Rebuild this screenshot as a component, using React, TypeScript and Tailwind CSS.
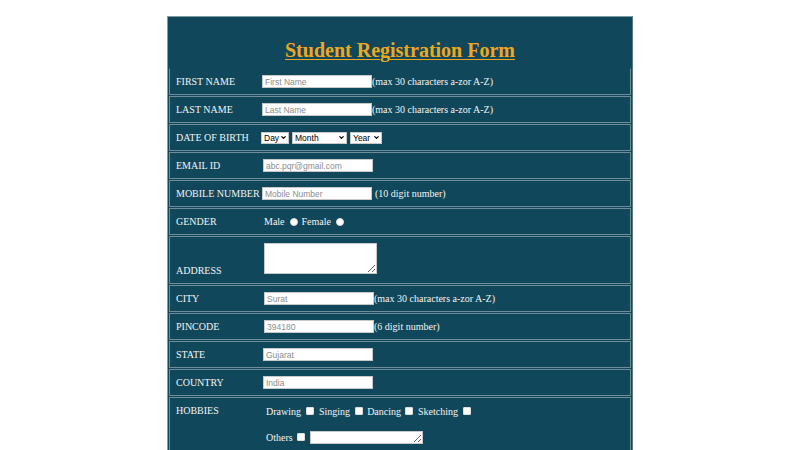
import React from 'react';
import { ChevronDown } from 'lucide-react';

const serif = "font-['Liberation_Serif','Times_New_Roman',serif]";
const sans = "font-['Liberation_Sans',Arial,sans-serif]";

const TextBox = ({ placeholder, className = '' }: { placeholder: string; className?: string }) => (
  <input
    type="text"
    placeholder={placeholder}
    className={`h-[13px] w-[110px] border border-[#c8c8c8] bg-white px-[2px] text-[8.5px] leading-[11px] text-black outline-none placeholder:text-[#8c8c8c] ${sans} ${className}`}
  />
);

const FakeSelect = ({ label, width }: { label: string; width: string }) => (
  <div
    className={`flex h-[12px] items-center justify-between border border-[#c8c8c8] bg-white pl-[2px] pr-[1px] text-[8.5px] leading-[10px] text-black ${sans} ${width}`}
  >
    <span>{label}</span>
    <ChevronDown size={7} strokeWidth={4} className="text-black" />
  </div>
);

const Radio = () => <span className="inline-block h-[8px] w-[8px] rounded-full border border-[#ddd] bg-white" />;
const Check = () => <span className="inline-block h-[8px] w-[8px] rounded-[1px] border border-[#ddd] bg-white" />;

const Row = ({
  label,
  children,
  first = false,
}: {
  label: string;
  children?: React.ReactNode;
  first?: boolean;
}) => (
  <div
    className={`flex h-[27px] items-center border border-[#6d8d97] ${first ? 'border-t-transparent' : ''}`}
  >
    <div className="w-[91px] shrink-0 whitespace-nowrap pl-[6px] leading-[12px]">{label}</div>
    <div className="flex items-center whitespace-nowrap leading-[12px]">{children}</div>
  </div>
);

export default function App() {
  return (
    <div className={`min-h-[450px] bg-white pt-4 text-[10px] text-[#f4f4f4] ${serif}`}>
      <div className="mx-auto h-[440px] w-[466px] overflow-hidden border border-[#7d9ba3] border-r-[#5a7780] bg-[#10475a] p-px">
        <div className="flex flex-col gap-px">
          <div className="h-[49px] pt-[21px] text-center">
            <span className="text-[20px] font-bold leading-[23px] text-[#efa71e] underline decoration-1 underline-offset-2">
              Student Registration Form
            </span>
          </div>

          <Row label="FIRST NAME" first>
            <TextBox placeholder="First Name" className="ml-px" />
            <span>(max 30 characters a-zor A-Z)</span>
          </Row>

          <Row label="LAST NAME">
            <TextBox placeholder="Last Name" className="ml-px" />
            <span>(max 30 characters a-zor A-Z)</span>
          </Row>

          <Row label="DATE OF BIRTH">
            <div className="flex items-center gap-[3px]">
              <FakeSelect label="Day" width="w-[28px]" />
              <FakeSelect label="Month" width="w-[55px]" />
              <FakeSelect label="Year" width="w-[32px]" />
            </div>
          </Row>

          <Row label="EMAIL ID">
            <TextBox placeholder="abc.pqr@gmail.com" className="ml-[2px]" />
          </Row>

          <Row label="MOBILE NUMBER">
            <TextBox placeholder="Mobile Number" className="ml-px" />
            <span className="ml-[3px]">(10 digit number)</span>
          </Row>

          <Row label="GENDER">
            <div className="ml-[3px] flex items-center">
              <span>Male</span>
              <span className="ml-[5px] flex"><Radio /></span>
              <span className="ml-[4px]">Female</span>
              <span className="ml-[5px] flex"><Radio /></span>
            </div>
          </Row>

          <div className="flex h-[48px] items-end border border-[#6d8d97]">
            <div className="mb-[6px] w-[91px] shrink-0 pl-[6px] leading-[12px]">ADDRESS</div>
            <textarea className="mb-[9px] ml-[3px] h-[31px] w-[113px] resize border border-[#c8c8c8] bg-white text-[8px] text-black outline-none" />
          </div>

          <Row label="CITY">
            <TextBox placeholder="Surat" className="ml-[3px]" />
            <span>(max 30 characters a-zor A-Z)</span>
          </Row>

          <Row label="PINCODE">
            <TextBox placeholder="394180" className="ml-[3px]" />
            <span>(6 digit number)</span>
          </Row>

          <Row label="STATE">
            <TextBox placeholder="Gujarat" className="ml-[2px]" />
          </Row>

          <Row label="COUNTRY">
            <TextBox placeholder="India" className="ml-[2px]" />
          </Row>

          <div className="flex border border-[#6d8d97] pb-[12px] pt-[6px]">
            <div className="w-[91px] shrink-0 pl-[6px] leading-[14px]">HOBBIES</div>
            <div className="ml-[5px] flex flex-col">
              <div className="flex h-[14px] items-center whitespace-nowrap">
                <span>Drawing</span>
                <span className="ml-[5px] flex"><Check /></span>
                <span className="ml-[5px]">Singing</span>
                <span className="ml-[5px] flex"><Check /></span>
                <span className="ml-[4px]">Dancing</span>
                <span className="ml-[4px] flex"><Check /></span>
                <span className="ml-[5px]">Sketching</span>
                <span className="ml-[5px] flex"><Check /></span>
              </div>
              <div className="mt-[12px] flex h-[14px] items-center whitespace-nowrap">
                <span>Others</span>
                <span className="ml-[4px] flex"><Check /></span>
                <textarea className="ml-[5px] h-[13px] w-[113px] resize border border-[#c8c8c8] bg-white text-[8px] text-black outline-none" />
              </div>
            </div>
          </div>
        </div>
      </div>
    </div>
  );
}
